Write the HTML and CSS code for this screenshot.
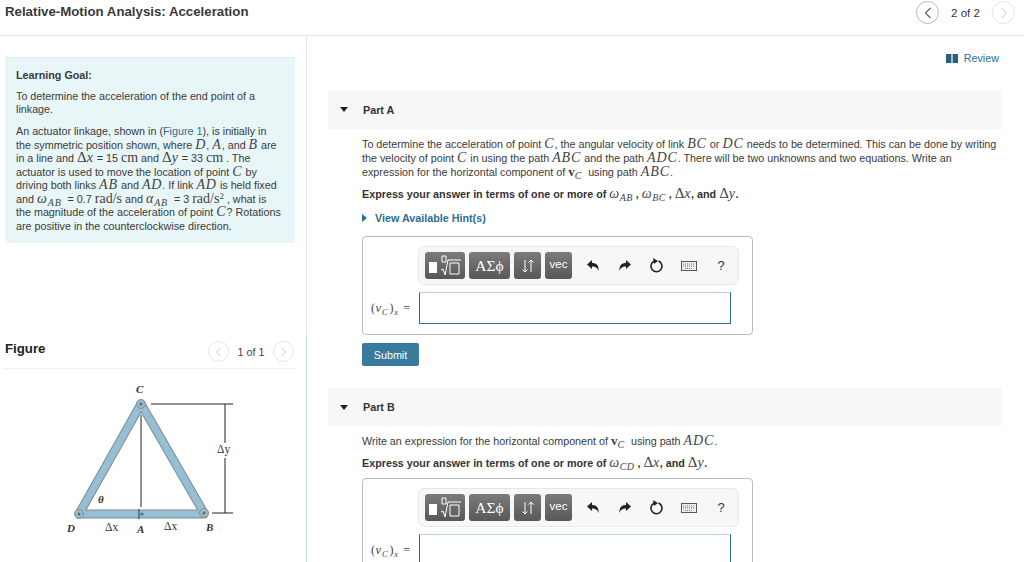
FILE: index.html
```html
<!DOCTYPE html>
<html lang="en">
<head>
<meta charset="utf-8">
<title>Relative-Motion Analysis: Acceleration</title>
<link rel="stylesheet" href="styles.css">
</head>
<body>
<header class="top">
  <h1>Relative-Motion Analysis: Acceleration</h1>
  <nav class="pager">
    <span class="circle active"><svg width="8" height="12" viewBox="0 0 8 12"><path d="M6.500 1 1.500 6l5 5" class="chev"/></svg></span>
    <span class="count">2 of 2</span>
    <span class="circle"><svg width="8" height="12" viewBox="0 0 8 12"><path d="M1.500 1l5 5-5 5" class="chev"/></svg></span>
  </nav>
</header>
<div class="main">
  <aside class="left">
    <section class="goal">
      <p class="goal-title">Learning Goal:</p>
      <p class="goal-p1">To determine the acceleration of the end point of a linkage.</p>
      <p class="goal-p2">An actuator linkage, shown in (<a class="link">Figure 1</a>), is initially in the symmetric position shown, where <i class="m">D</i>, <i class="m">A</i>, and <i class="m">B</i> are in a line and <span class="d">Δ</span><i class="m">x</i> = 15 <span class="r">cm</span> and <span class="d">Δ</span><i class="m">y</i> = 33 <span class="r">cm</span> . The actuator is used to move the location of point <i class="m">C</i> by driving both links <i class="m">AB</i> and <i class="m">AD</i>. If link <i class="m">AD</i> is held fixed and <i class="m">ω<sub>AB</sub></i> = 0.7 <span class="r">rad/s</span> and <i class="m">α<sub>AB</sub></i> = 3 <span class="r">rad/s<sup>2</sup></span> , what is the magnitude of the acceleration of point <i class="m">C</i>? Rotations are positive in the counterclockwise direction.</p>
    </section>
    <div class="fig-head">
      <h2>Figure</h2>
      <nav class="pager small">
        <span class="circle"><svg width="7" height="10" viewBox="0 0 8 12"><path d="M6.500 1 1.500 6l5 5" class="chev"/></svg></span>
        <span class="count">1 of 1</span>
        <span class="circle"><svg width="7" height="10" viewBox="0 0 8 12"><path d="M1.500 1l5 5-5 5" class="chev"/></svg></span>
      </nav>
    </div>
    <svg class="figure" width="180" height="160" viewBox="60 380 180 160">
      <g class="dim">
        <path d="M151 404H233M225 404V443M225 458V513M212 513H233M141 415V507"/>
      </g>
      <g class="bar">
        <path d="M79 514 141 404"/>
        <path d="M141 404 204 513"/>
        <path d="M79 514H204"/>
      </g>
      <g class="fill">
        <path d="M79 514 141 404"/>
        <path d="M141 404 204 513"/>
        <path d="M79 514H204"/>
      </g>
      <path d="M138 509h2v10h-2z" class="joint"/>
      <g class="pin"><circle cx="79" cy="514" r="4.500"/><circle cx="141" cy="404" r="4.500"/><circle cx="204" cy="513" r="4.500"/></g>
      <g class="dot"><circle cx="79" cy="514" r="1.500"/><circle cx="141" cy="404" r="1.500"/><circle cx="204" cy="513" r="1.500"/><circle cx="142" cy="514" r="1.500"/></g>
      <text x="136" y="393" class="lbl">C</text>
      <text x="67" y="532" class="lbl">D</text>
      <text x="137" y="533" class="lbl">A</text>
      <text x="206" y="531" class="lbl">B</text>
      <text x="98" y="503" class="lbl">θ</text>
      <text x="105" y="531" class="lbl up">Δx</text>
      <text x="164" y="530" class="lbl up">Δx</text>
      <text x="217" y="453" class="lbl up">Δy</text>
    </svg>
  </aside>
  <main class="right">
    <div class="review-row">
      <svg width="12" height="9" viewBox="0 0 12 9"><path d="M0 0h5.400v9H0zM6.600 0H12v9H6.600z" fill="#2a5f7e"/></svg>
      <a class="review">Review</a>
    </div>
    <section class="part">
      <h3 class="band"><span class="tri"></span>Part A</h3>
      <div class="body">
        <p class="q">To determine the acceleration of point <i class="m">C</i>, the angular velocity of link <i class="m">BC</i> or <i class="m">DC</i> needs to be determined. This can be done by writing the velocity of point <i class="m">C</i> in using the path <i class="m">ABC</i> and the path <i class="m">ADC</i>. There will be two unknowns and two equations. Write an expression for the horizontal component of <b class="v">v</b><i class="m"><sub>C</sub></i> using path <i class="m">ABC</i>.</p>
        <p class="ask">Express your answer in terms of one or more of <i class="m nb">ω<sub>AB</sub></i>, <i class="m nb">ω<sub>BC</sub></i>, <span class="d nb">Δ</span><i class="m nb">x</i>, and <span class="d nb">Δ</span><i class="m nb">y</i>.</p>
        <p class="hint"><span class="hint-tri"></span>View Available Hint(s)</p>
        <div class="answer">
          <div class="toolbar">
            <span class="btn b1"><span class="sq"></span><svg width="23" height="22" viewBox="0 0 23 22"><path d="M2 15l2-1 2 6 3-15h13" class="rad"/><path d="M3 1h4v6H3zM11 8h9v11h-9z" class="rad"/></svg></span>
            <span class="btn b2">ΑΣϕ</span>
            <span class="btn b3"><svg width="14" height="14" viewBox="0 0 14 14"><path d="M4 1v12M1.500 10.500 4 13l2.500-2.500M10 13V1M7.500 3.500 10 1l2.500 2.500" class="rad"/></svg></span>
            <span class="btn b4">vec</span>
            <span class="tool t-undo"><svg width="12" height="12" viewBox="0 0 12 12"><path d="M0 4.500 5 0v3c4.500 0 7 2.500 6.500 8C10.500 8 9 6.500 5 6.500V9z" fill="#222"/></svg></span>
            <span class="tool t-redo"><svg width="12" height="12" viewBox="0 0 12 12"><path d="M12 4.500 7 0v3C2.500 3 0 5.500.500 11 1.500 8 3 6.500 7 6.500V9z" fill="#222"/></svg></span>
            <span class="tool t-reset"><svg width="14" height="15" viewBox="0 0 14 15"><path d="M8.500 3.100A5.500 5.500 0 1 1 4 3.300" fill="none" stroke="#222" stroke-width="1.600"/><path d="M3 0 8 3 4 6z" fill="#222"/></svg></span>
            <span class="tool t-kbd"><svg width="16" height="10" viewBox="0 0 16 10"><rect x=".5" y=".5" width="15" height="9" fill="#eee" stroke="#555"/><path d="M2 3h12M2 5h12M4 7.500h8" stroke="#777" stroke-dasharray="1 1" fill="none"/></svg></span>
            <span class="tool t-help">?</span>
          </div>
          <div class="row">
            <span class="lab">(<i class="m">v<sub>C</sub></i>)<i class="m"><sub>x</sub></i> =</span>
            <span class="input"></span>
          </div>
        </div>
        <button class="submit">Submit</button>
      </div>
    </section>
    <section class="part part-b">
      <h3 class="band"><span class="tri"></span>Part B</h3>
      <div class="body">
        <p class="q">Write an expression for the horizontal component of <b class="v">v</b><i class="m"><sub>C</sub></i> using path <i class="m">ADC</i>.</p>
        <p class="ask">Express your answer in terms of one or more of <i class="m nb">ω<sub>CD</sub></i>, <span class="d nb">Δ</span><i class="m nb">x</i>, and <span class="d nb">Δ</span><i class="m nb">y</i>.</p>
        <div class="answer">
          <div class="toolbar">
            <span class="btn b1"><span class="sq"></span><svg width="23" height="22" viewBox="0 0 23 22"><path d="M2 15l2-1 2 6 3-15h13" class="rad"/><path d="M3 1h4v6H3zM11 8h9v11h-9z" class="rad"/></svg></span>
            <span class="btn b2">ΑΣϕ</span>
            <span class="btn b3"><svg width="14" height="14" viewBox="0 0 14 14"><path d="M4 1v12M1.500 10.500 4 13l2.500-2.500M10 13V1M7.500 3.500 10 1l2.500 2.500" class="rad"/></svg></span>
            <span class="btn b4">vec</span>
            <span class="tool t-undo"><svg width="12" height="12" viewBox="0 0 12 12"><path d="M0 4.500 5 0v3c4.500 0 7 2.500 6.500 8C10.500 8 9 6.500 5 6.500V9z" fill="#222"/></svg></span>
            <span class="tool t-redo"><svg width="12" height="12" viewBox="0 0 12 12"><path d="M12 4.500 7 0v3C2.500 3 0 5.500.500 11 1.500 8 3 6.500 7 6.500V9z" fill="#222"/></svg></span>
            <span class="tool t-reset"><svg width="14" height="15" viewBox="0 0 14 15"><path d="M8.500 3.100A5.500 5.500 0 1 1 4 3.300" fill="none" stroke="#222" stroke-width="1.600"/><path d="M3 0 8 3 4 6z" fill="#222"/></svg></span>
            <span class="tool t-kbd"><svg width="16" height="10" viewBox="0 0 16 10"><rect x=".5" y=".5" width="15" height="9" fill="#eee" stroke="#555"/><path d="M2 3h12M2 5h12M4 7.500h8" stroke="#777" stroke-dasharray="1 1" fill="none"/></svg></span>
            <span class="tool t-help">?</span>
          </div>
          <div class="row">
            <span class="lab">(<i class="m">v<sub>C</sub></i>)<i class="m"><sub>x</sub></i> =</span>
            <span class="input"></span>
          </div>
        </div>
      </div>
    </section>
  </main>
</div>
</body>
</html>
```
FILE: styles.css
```css
* { box-sizing: border-box; }
html, body { margin: 0; padding: 0; height: 562px; overflow: hidden; background: #fff; }
body { font-family: "Liberation Sans", Arial, sans-serif; font-size: 10.750px; color: #333; }
p, h1, h2, h3 { margin: 0; }

.top { height: 36px; border-bottom: 1px solid #e2e2e2; display: flex; align-items: flex-start; justify-content: space-between; padding: 0 9px 0 5px; }
h1 { font-size: 13.250px; font-weight: bold; line-height: 14px; margin-top: 5px; color: #3a3a3a; }
.pager { display: flex; align-items: center; margin-top: 1px; }
.pager .count { font-size: 11.500px; width: 53px; text-align: center; color: #333; }
.circle { width: 23px; height: 23px; border: 1px solid #e4e4e4; border-radius: 50%; display: flex; align-items: center; justify-content: center; color: #ddd; }
.circle.active { border-color: #bbb; color: #666; }
.chev { fill: none; stroke: currentColor; stroke-width: 1.300; }

.main { display: flex; height: 526px; }
.left { width: 307px; flex: none; padding: 21px 11px 0 5px; border-right: 1px solid #e6e6e6; position: relative; }
.left::after { content: ""; position: absolute; top: 299px; bottom: 0; right: -1px; width: 1px; background: #c4d6e8; }

.goal { background: #e8f6f8; border-top: 1px solid #e3e8e8; height: 186px; padding: 11px 11px 0; line-height: 13px; color: #3a3a3a; }
.goal-title { font-weight: bold; }
.goal-p1 { margin-top: 8px; }
.goal-p2 { margin-top: 9px; line-height: 13.500px; }
.link { color: #2a6f93; }

.m { font-family: "Liberation Serif", serif; font-size: 14px; font-style: italic; line-height: 0; letter-spacing: .9px; color: #444; }
.m sub { font-size: 10px; line-height: 0; vertical-align: -3px; margin-right: 3px; letter-spacing: .8px; }
.r { font-family: "Liberation Serif", serif; font-size: 14px; line-height: 0; color: #444; }
.r sup { font-size: 9px; line-height: 0; vertical-align: 4px; }
.d { font-family: "Liberation Serif", serif; font-size: 15px; line-height: 0; color: #444; }
.v { font-family: "Liberation Serif", serif; font-size: 13px; line-height: 0; }
.nb { font-weight: normal; }
.m.nb { letter-spacing: .5px; }
.m.nb sub { letter-spacing: .4px; }

.fig-head { margin-top: 93px; height: 33px; border-bottom: 1px solid #eee; display: flex; justify-content: space-between; align-items: flex-start; }
h2 { font-size: 13.250px; line-height: 14px; font-weight: bold; color: #222; margin-top: 6px; }
.pager.small { margin: 5px 1px 0 0; }
.pager.small .count { font-size: 10.750px; width: 44px; color: #444; }
.pager.small .circle { width: 21px; height: 21px; }
.figure { display: block; margin: 11px 0 0 55px; }
.dim path { fill: none; stroke: #222; stroke-width: 1; }
.bar path { fill: none; stroke: #80898f; stroke-width: 9; stroke-linecap: round; }
.fill path { fill: none; stroke: #94bfd5; stroke-width: 7; stroke-linecap: round; }
.joint { fill: #5f7f90; }
.pin circle { fill: #9ab9c8; stroke: #8a8f92; stroke-width: 1; }
.dot circle { fill: #5e6c74; }
.lbl { font-family: "Liberation Serif", serif; font-style: italic; font-size: 11px; font-weight: bold; fill: #333; }
.lbl.up { font-weight: normal; font-style: normal; font-size: 11.500px; }

.right { flex: 1; min-width: 0; padding: 0 22px 0 21px; }
.review-row { height: 54px; padding: 16px 3px 0 0; display: flex; justify-content: flex-end; align-items: flex-start; gap: 6px; }
.review-row svg { margin-top: 2px; }
.review { color: #2a6f93; line-height: 13px; }

.band { background: #f7f7f7; height: 39px; display: flex; align-items: center; font-size: 10.750px; font-weight: bold; color: #333; padding-left: 12px; }
.tri { width: 0; height: 0; border-left: 4.500px solid transparent; border-right: 4.500px solid transparent; border-top: 5px solid #222; margin-right: 15px; }

.body { padding: 8px 0 0 34px; }
.q { line-height: 14px; width: 642px; color: #3a3a3a; }
.ask { font-weight: bold; margin-top: 8px; line-height: 14px; color: #333; }
.hint { margin-top: 10px; font-weight: bold; color: #2a6f93; line-height: 14px; display: flex; align-items: center; }
.hint-tri { width: 0; height: 0; border-top: 4px solid transparent; border-bottom: 4px solid transparent; border-left: 5px solid #2a6f93; margin-right: 8px; }

.answer { margin-top: 11px; width: 391px; height: 99px; border: 1px solid #bbb; border-radius: 4px; padding: 9px 12px 0 55px; }
.toolbar { height: 39px; width: 321px; background: #f7f7f7; border: 1px solid #e8e8e8; border-radius: 6px; display: flex; align-items: center; padding-left: 6px; }
.btn { height: 27px; border-radius: 3px; background: linear-gradient(#7b7b7b, #585858); color: #fff; display: flex; align-items: center; justify-content: center; margin-right: 4px; }
.b1 { width: 40px; gap: 2px; }
.sq { width: 8px; height: 11px; background: #fff; margin-top: 4px; }
.rad { fill: none; stroke: #fff; stroke-width: 1; }
.b2 { width: 41px; font-family: "Liberation Serif", serif; font-size: 15.500px; }
.b3 { width: 27px; }
.b4 { width: 27px; font-size: 11.500px; padding-bottom: 3px; margin-right: 0; }
.tool { width: 32px; display: flex; justify-content: center; align-items: center; color: #333; }
.t-undo { margin-left: 5px; }
.t-help { font-size: 13px; }
.row { display: flex; align-items: center; margin-top: 7px; margin-left: -47px; }
.lab { width: 48px; white-space: nowrap; font-family: "Liberation Serif", serif; font-size: 12px; letter-spacing: .6px; color: #444; }
.lab .m { font-size: 12.500px; }
.lab .m sub { font-size: 8.500px; margin-right: 1px; }
.input { width: 312px; height: 32px; border: 1px solid #2a6f93; border-top-color: #b9d3de; display: block; background: #fff; }

.submit { margin-top: 8px; width: 57px; height: 23px; border: 0; border-radius: 2px; background: #3a7a9c; color: #fff; font-family: inherit; font-size: 10.750px; padding: 0; display: block; }

.part-b { margin-top: 22px; }
.part-b .band { height: 38px; }
.part-b .body { padding-top: 8px; }
.part-b .ask { margin-top: 8px; }
.part-b .answer { margin-top: 8px; }
```
